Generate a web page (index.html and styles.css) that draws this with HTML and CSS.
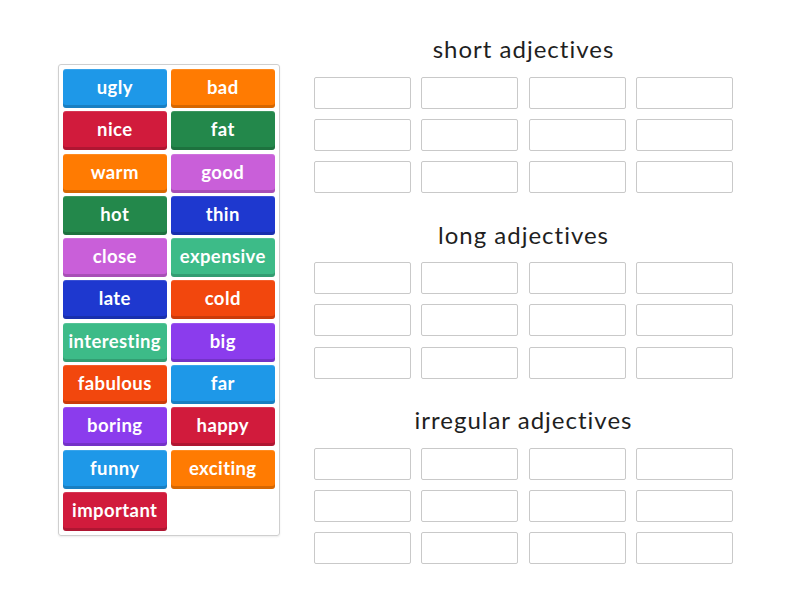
FILE: index.html
```html
<!DOCTYPE html>
<html>
<head>
<meta charset="utf-8">
<link rel="stylesheet" href="styles.css">
</head>
<body>
<div class="page">
  <div class="bank">
    <div class="tile blue">ugly</div>
    <div class="tile orange">bad</div>
    <div class="tile red">nice</div>
    <div class="tile green">fat</div>
    <div class="tile orange">warm</div>
    <div class="tile magenta">good</div>
    <div class="tile green">hot</div>
    <div class="tile navy">thin</div>
    <div class="tile magenta">close</div>
    <div class="tile mint">expensive</div>
    <div class="tile navy">late</div>
    <div class="tile flame">cold</div>
    <div class="tile mint">interesting</div>
    <div class="tile purple">big</div>
    <div class="tile flame">fabulous</div>
    <div class="tile blue">far</div>
    <div class="tile purple">boring</div>
    <div class="tile red">happy</div>
    <div class="tile blue">funny</div>
    <div class="tile orange">exciting</div>
    <div class="tile red">important</div>
  </div>
  <div class="groups">
    <section class="group">
      <h2 class="title">short adjectives</h2>
      <div class="slots">
        <div class="slot"></div><div class="slot"></div><div class="slot"></div><div class="slot"></div>
        <div class="slot"></div><div class="slot"></div><div class="slot"></div><div class="slot"></div>
        <div class="slot"></div><div class="slot"></div><div class="slot"></div><div class="slot"></div>
      </div>
    </section>
    <section class="group">
      <h2 class="title">long adjectives</h2>
      <div class="slots">
        <div class="slot"></div><div class="slot"></div><div class="slot"></div><div class="slot"></div>
        <div class="slot"></div><div class="slot"></div><div class="slot"></div><div class="slot"></div>
        <div class="slot"></div><div class="slot"></div><div class="slot"></div><div class="slot"></div>
      </div>
    </section>
    <section class="group">
      <h2 class="title">irregular adjectives</h2>
      <div class="slots">
        <div class="slot"></div><div class="slot"></div><div class="slot"></div><div class="slot"></div>
        <div class="slot"></div><div class="slot"></div><div class="slot"></div><div class="slot"></div>
        <div class="slot"></div><div class="slot"></div><div class="slot"></div><div class="slot"></div>
      </div>
    </section>
  </div>
</div>
</body>
</html>
```

FILE: styles.css
```css
html, body {
  margin: 0;
  padding: 0;
  background: #ffffff;
}

.page {
  display: flex;
  align-items: flex-start;
  padding: 35px 0 0 58px;
}

.bank {
  margin-top: 29px;
  width: 212px;
  padding: 4px;
  border: 1px solid #cfcfcf;
  border-radius: 3px;
  box-shadow: 0 1px 2px rgba(0, 0, 0, 0.08);
  display: grid;
  grid-template-columns: 103.5px 103.5px;
  grid-auto-rows: 39px;
  column-gap: 4.5px;
  row-gap: 3.3px;
}

.tile {
  display: flex;
  align-items: center;
  justify-content: center;
  border-radius: 3px;
  color: #ffffff;
  font-family: "Lato", "Noto Sans", sans-serif;
  font-weight: 700;
  font-size: 18.5px;
  letter-spacing: 0.4px;
  padding-bottom: 3px;
  box-sizing: border-box;
  box-shadow: inset 0 -3px 0 rgba(0, 0, 0, 0.16), inset 0 1px 0 rgba(255, 255, 255, 0.12);
}

.blue { background: #1e98e8; }
.orange { background: #ff7b02; }
.red { background: #d11b3c; }
.green { background: #23884b; }
.magenta { background: #c95fd9; }
.navy { background: #1e38cf; }
.mint { background: #3dbb88; }
.flame { background: #f2470d; }
.purple { background: #8b3ced; }

.groups {
  margin-left: 34px;
  width: 419px;
}

.group {
  margin-bottom: 27.5px;
}

.title {
  margin: 0 0 13.5px 0;
  height: 28px;
  line-height: 28px;
  text-align: center;
  font-family: "Lato", "Noto Sans", sans-serif;
  font-weight: 400;
  font-size: 24px;
  letter-spacing: 1px;
  color: #1f1f1f;
}

.slots {
  display: grid;
  grid-template-columns: repeat(4, 97px);
  grid-auto-rows: 32px;
  column-gap: 10.3px;
  row-gap: 10.3px;
}

.slot {
  border: 1px solid #c9c9c9;
  border-radius: 2px;
  box-sizing: border-box;
}
```
